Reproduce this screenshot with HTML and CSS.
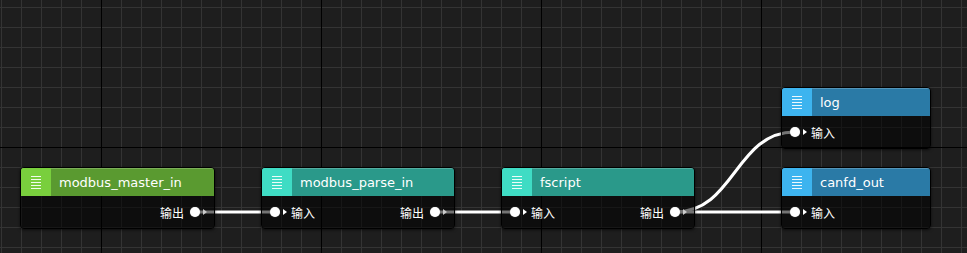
FILE: index.html
```html
<!doctype html>
<html>
<head>
<meta charset="utf-8">
<title>flow</title>
<link rel="stylesheet" href="styles.css">
</head>
<body>
<div class="graph">
    <svg class="wires" width="967" height="253">
        <path d="M195 212 H275"/>
        <path d="M435 212 H515"/>
        <path d="M675 212 H795"/>
        <path d="M675 212 C735 212 735 132 795 132"/>
    </svg>

    <div class="node green n1">
        <div class="head">
            <span class="icon"><svg width="10" height="14"><path d="M0 1.5H10M0 4.5H10M0 7.5H10M0 10.5H10M0 13.5H10"/></svg></span>
            <span class="title">modbus_master_in</span>
        </div>
        <div class="ports end">
            <span class="port"><span class="label">输出</span><i class="dot"></i><i class="arrow"></i></span>
        </div>
    </div>

    <div class="node teal n2">
        <div class="head">
            <span class="icon"><svg width="10" height="14"><path d="M0 1.5H10M0 4.5H10M0 7.5H10M0 10.5H10M0 13.5H10"/></svg></span>
            <span class="title">modbus_parse_in</span>
        </div>
        <div class="ports">
            <span class="port in"><i class="dot"></i><i class="arrow"></i><span class="label">输入</span></span>
            <span class="port"><span class="label">输出</span><i class="dot"></i><i class="arrow"></i></span>
        </div>
    </div>

    <div class="node teal n3">
        <div class="head">
            <span class="icon"><svg width="10" height="14"><path d="M0 1.5H10M0 4.5H10M0 7.5H10M0 10.5H10M0 13.5H10"/></svg></span>
            <span class="title">fscript</span>
        </div>
        <div class="ports">
            <span class="port in"><i class="dot"></i><i class="arrow"></i><span class="label">输入</span></span>
            <span class="port"><span class="label">输出</span><i class="dot"></i><i class="arrow"></i></span>
        </div>
    </div>

    <div class="node blue n4">
        <div class="head">
            <span class="icon"><svg width="10" height="14"><path d="M0 1.5H10M0 4.5H10M0 7.5H10M0 10.5H10M0 13.5H10"/></svg></span>
            <span class="title">log</span>
        </div>
        <div class="ports">
            <span class="port in"><i class="dot"></i><i class="arrow"></i><span class="label">输入</span></span>
        </div>
    </div>

    <div class="node blue n5">
        <div class="head">
            <span class="icon"><svg width="10" height="14"><path d="M0 1.5H10M0 4.5H10M0 7.5H10M0 10.5H10M0 13.5H10"/></svg></span>
            <span class="title">canfd_out</span>
        </div>
        <div class="ports">
            <span class="port in"><i class="dot"></i><i class="arrow"></i><span class="label">输入</span></span>
        </div>
    </div>
</div>
</body>
</html>
```
FILE: styles.css
```css
* { padding: 0; margin: 0; }
body { background: #1e1e1e; font-family: "DejaVu Sans", "Noto Sans CJK SC", sans-serif; }

/* canvas with minor / major grid */
.graph { position: relative; width: 967px; height: 253px; overflow: hidden; background-color: #1e1e1e;
    background-image:
        linear-gradient(to right, #000 1px, transparent 1px),
        linear-gradient(to bottom, #000 1px, transparent 1px),
        linear-gradient(to right, #343434 1px, transparent 1px),
        linear-gradient(to bottom, #343434 1px, transparent 1px);
    background-size: 220px 220px, 220px 220px, 20px 20px, 20px 20px;
    background-position: 101px 147px, 101px 147px, 1px 7px, 1px 7px; }

.wires { position: absolute; left: 0; top: 0; }
.wires path { fill: none; stroke: #fff; stroke-width: 3; }

/* nodes */
.node { position: absolute; top: 167px; width: 192px; border: 1px solid #000; border-radius: 4px; overflow: hidden; box-shadow: 0 1px 3px rgba(0,0,0,.6); }
.n1 { left: 20px; width: 193px; }
.n2 { left: 261px; }
.n3 { left: 501px; }
.n4 { left: 781px; top: 87px; width: 148px; }
.n5 { left: 781px; width: 148px; }

.head { display: flex; align-items: center; height: 28px; color: #fff; font-size: 13px; box-shadow: inset 0 1px rgba(255,255,255,.2); }
.icon { display: flex; align-items: center; justify-content: center; width: 30px; height: 28px; }
.icon path { stroke: rgba(255,255,255,.9); stroke-width: 1; }
.title { padding-left: 8px; white-space: nowrap; }

.green .head { background: #5a9a30; }
.green .icon { background: #79cf3d; }
.teal .head { background: #2a998a; }
.teal .icon { background: #3fdcc4; }
.blue .head { background: #2a7aa6; }
.blue .icon { background: #3db4ef; }

/* ports */
.ports { display: flex; align-items: center; justify-content: space-between; height: 32px; padding: 0 7px 0 8px; background: rgba(0,0,0,.55); color: #fff; font-size: 12px; }
.ports.end { justify-content: flex-end; }
.port { display: flex; align-items: center; }
.dot { display: block; width: 10px; height: 10px; border-radius: 50%; background: #fff; box-shadow: 0 0 1px #888; }
.arrow { display: block; margin-left: 3px; border-left: 4px solid #ccc; border-top: 3px solid transparent; border-bottom: 3px solid transparent; }
.port .label { margin-right: 6px; }
.port.in .label { margin: 0 0 0 4px; }
.port.in .arrow { border-left-color: #fff; }
```
